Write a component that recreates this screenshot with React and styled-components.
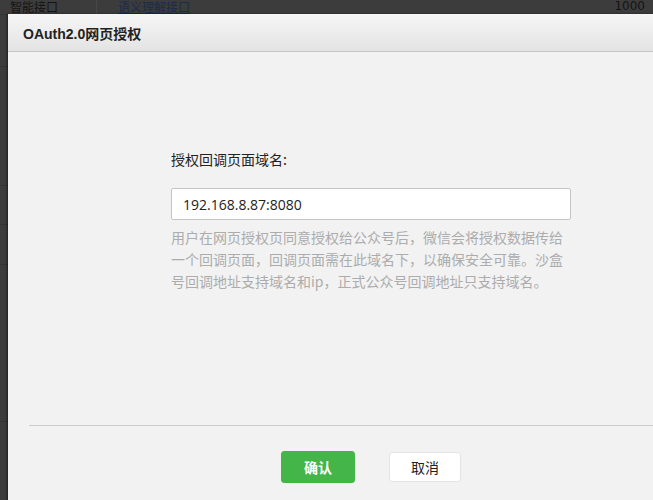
import React from "react";
import styled, { createGlobalStyle } from "styled-components";

const GlobalStyle = createGlobalStyle`
  html, body {
    margin: 0;
    padding: 0;
    background: #3c3c3c;
    overflow: hidden;
  }
  body {
    font-family: "Liberation Sans", "Noto Sans CJK SC", sans-serif;
  }
`;

const Page = styled.div`
  position: relative;
  width: 653px;
  height: 500px;
  overflow: hidden;
  background: #3c3c3c;
`;

const Table = styled.div`
  display: flex;
  flex-direction: column;
  margin-top: -16px;
`;

const Row = styled.div`
  display: flex;
  align-items: flex-end;
  height: ${({ h }) => h}px;
  border-bottom: 1px solid #333;
  font-size: 12px;
  font-family: "Noto Sans CJK SC", sans-serif;
`;

const Cell = styled.div`
  width: ${({ w }) => (w ? `${w}px` : "auto")};
  flex: ${({ w }) => (w ? "none" : 1)};
  padding: 0 ${({ pad }) => pad || 10}px;
  box-sizing: border-box;
  color: ${({ link }) => (link ? "#1b2b4a" : "#141414")};
  text-decoration: ${({ link }) => (link ? "underline" : "none")};
  border-right: ${({ sep }) => (sep ? "1px solid #474747" : "none")};
  line-height: 15px;
  height: 100%;
  display: flex;
  align-items: flex-end;
  justify-content: ${({ right }) => (right ? "flex-end" : "flex-start")};
  font-family: ${({ num }) => (num ? '"DejaVu Sans", sans-serif' : "inherit")};
`;

const Dialog = styled.div`
  position: absolute;
  left: 8px;
  top: 14px;
  width: 726px;
  height: 520px;
  background: #f2f2f2;
  box-shadow: -1px 0 2px rgba(0, 0, 0, 0.5);
  display: flex;
  flex-direction: column;
`;

const Header = styled.div`
  height: 37px;
  display: flex;
  align-items: center;
  padding-left: 15px;
  background: linear-gradient(#f6f6f6, #e3e3e3);
  border-bottom: 1px solid #c6c6c6;
`;

const Title = styled.h3`
  margin: 0;
  font-size: 14px;
  font-weight: bold;
  color: #222;
  font-family: "Liberation Sans", "Noto Sans CJK SC", sans-serif;
`;

const Body = styled.div`
  height: 373px;
  box-sizing: border-box;
  padding-top: 97px;
  display: flex;
  flex-direction: column;
  align-items: center;
`;

const Field = styled.div`
  width: 400px;
  display: flex;
  flex-direction: column;
`;

const Label = styled.label`
  font-size: 14px;
  color: #222;
  font-family: "Noto Sans CJK SC", sans-serif;
  line-height: 20px;
  margin-bottom: 19px;
`;

const Input = styled.input`
  width: 400px;
  height: 32px;
  box-sizing: border-box;
  border: 1px solid #c4c4c4;
  border-radius: 2px;
  background: #fff;
  padding: 0 11px;
  font-size: 14px;
  font-family: "Open Sans", sans-serif;
  color: #222;
  outline: none;
  caret-color: #000;
`;

const Help = styled.p`
  margin: 6px 0 0;
  font-size: 14px;
  line-height: 22px;
  color: #acacac;
  font-family: "Noto Sans CJK SC", sans-serif;
`;

const Divider = styled.div`
  margin: 0 21px;
  border-top: 1px solid #cbcbcb;
`;

const Footer = styled.div`
  display: flex;
  justify-content: center;
  align-items: center;
  gap: 34px;
  padding-top: 25px;
`;

const Button = styled.button`
  width: ${({ primary }) => (primary ? 74 : 72)}px;
  height: ${({ primary }) => (primary ? 32 : 30)}px;
  border-radius: 3px;
  border: 1px solid ${({ primary }) => (primary ? "#44b549" : "#e4e4e4")};
  background: ${({ primary }) => (primary ? "#44b549" : "#fff")};
  color: ${({ primary }) => (primary ? "#fff" : "#222")};
  font-size: 14px;
  font-weight: ${({ primary }) => (primary ? "bold" : "normal")};
  font-family: "Noto Sans CJK SC", sans-serif;
  padding: 0;
  cursor: pointer;
`;

const rows = [
  { h: 30, cells: true },
  { h: 51 },
  { h: 118 },
  { h: 38 },
  { h: 39 },
  { h: 156 },
  { h: 80 },
];

export default function App() {
  return (
    <>
      <GlobalStyle />
      <Page>
        <Table>
          {rows.map((r, i) => (
            <Row key={i} h={r.h}>
              {r.cells && (
                <>
                  <Cell w={97} sep>智能接口</Cell>
                  <Cell w={200} pad={21} link>语义理解接口</Cell>
                  <Cell right num pad={8}>1000</Cell>
                </>
              )}
            </Row>
          ))}
        </Table>
        <Dialog>
          <Header>
            <Title>OAuth2.0网页授权</Title>
          </Header>
          <Body>
            <Field>
              <Label>授权回调页面域名:</Label>
              <Input defaultValue="192.168.8.87:8080" autoFocus />
              <Help>
                用户在网页授权页同意授权给公众号后，微信会将授权数据传给一个回调页面，回调页面需在此域名下，以确保安全可靠。沙盒号回调地址支持域名和ip，正式公众号回调地址只支持域名。
              </Help>
            </Field>
          </Body>
          <Divider />
          <Footer>
            <Button primary>确认</Button>
            <Button>取消</Button>
          </Footer>
        </Dialog>
      </Page>
    </>
  );
}
